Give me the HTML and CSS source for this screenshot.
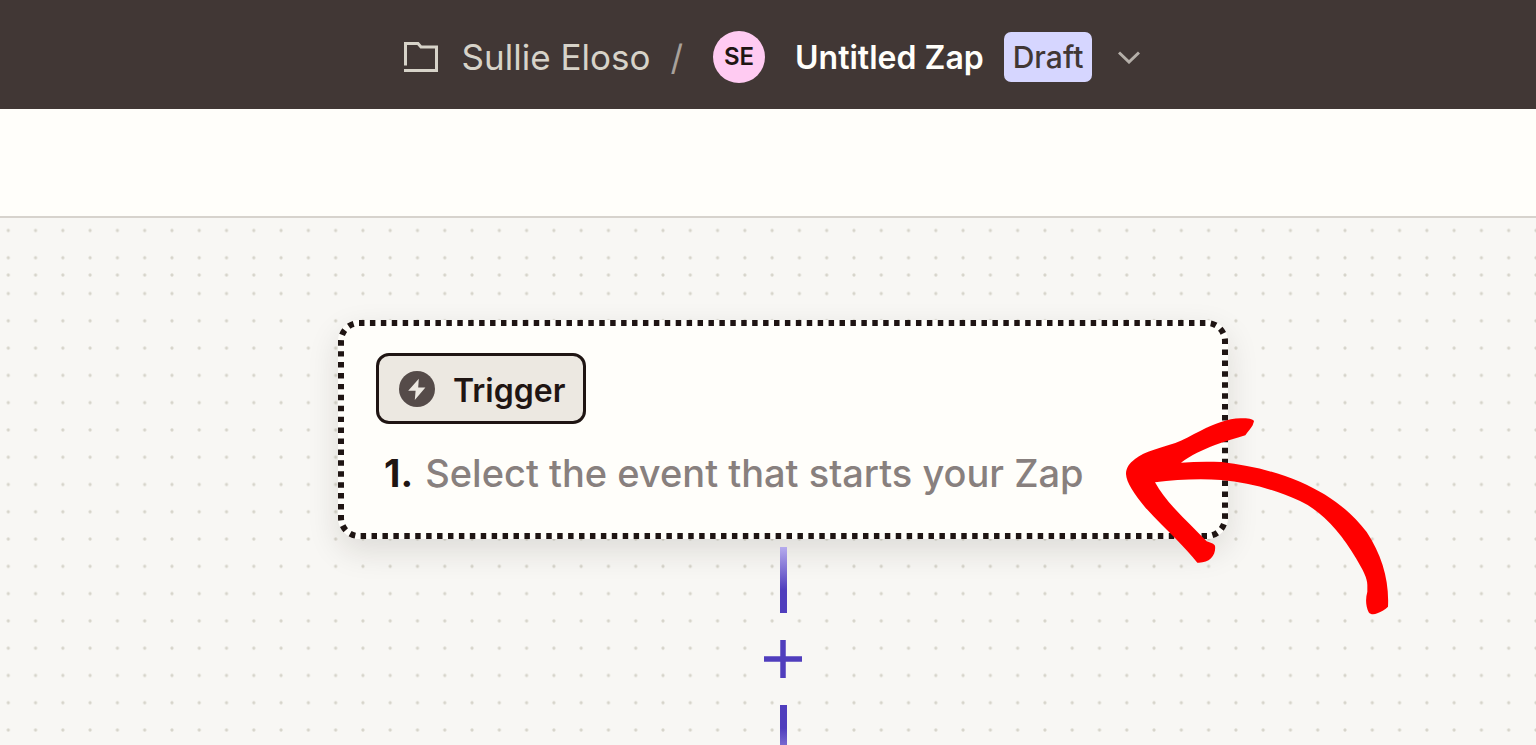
FILE: index.html
```html
<!DOCTYPE html>
<html lang="en">
<head>
    <meta charset="UTF-8">
    <meta name="viewport" content="width=device-width, initial-scale=1.0">
    <title>Untitled Zap</title>
    <link rel="stylesheet" href="styles.css">
</head>
<body>
    <header class="topbar">
        <a class="folder" href="#">
            <svg class="folder-icon" viewBox="0 0 34 32" aria-hidden="true">
                <path d="M1.5 24.5V2.5H14L17 6H32.5V29.5H0" fill="none" stroke="currentColor" stroke-width="3"/>
            </svg>
            <span>Sullie Eloso</span>
        </a>
        <span class="slash">/</span>
        <span class="avatar">SE</span>
        <h1 class="zap-name">Untitled Zap</h1>
        <span class="status">Draft</span>
        <button class="menu-btn" aria-label="Zap menu">
            <svg class="chevron" viewBox="0 0 22 14" aria-hidden="true">
                <path d="M1 2.5L11 12L21 2.5" fill="none" stroke="currentColor" stroke-width="3"/>
            </svg>
        </button>
    </header>

    <div class="toolbar"></div>

    <main class="canvas">
        <!-- dot grid -->
        <svg class="dots" aria-hidden="true">
            <defs>
                <pattern id="dots-top" x="-5.35" y="-1.15" width="27.28" height="27.28" patternUnits="userSpaceOnUse">
                    <circle cx="13.64" cy="13.64" r="1.6" fill="#d6d4ca"/>
                </pattern>
                <pattern id="dots-mid" href="#dots-top" y="43.4"/>
                <pattern id="dots-main" href="#dots-top" y="61.9"/>
            </defs>
            <rect width="100%" height="49" fill="url(#dots-top)"/>
            <rect y="49" width="100%" height="18" fill="url(#dots-mid)"/>
            <rect y="67" width="100%" height="100%" fill="url(#dots-main)"/>
        </svg>

        <div class="step">
            <button class="card">
                <svg class="card-border" aria-hidden="true">
                    <rect class="card-outline" x="3" y="3" rx="18" pathLength="396"/>
                </svg>
                <span class="badge">
                    <svg class="bolt-icon" viewBox="0 0 36 36" aria-hidden="true">
                        <circle cx="18" cy="18" r="18" fill="#554b49"/>
                        <path d="M19.8 7.8L9.2 19.8H16.6L15.8 29L26.4 16.4H19.2Z" fill="#ece8e1"/>
                    </svg>
                    <span class="badge-text">Trigger</span>
                </span>
                <span class="prompt"><b class="number">1.</b> Select the event that starts your Zap</span>
            </button>
            <svg class="arrow" viewBox="0 0 930 690" aria-hidden="true">
                <path fill="#ff0000" d="M462 64C459 56 444 55 422 55C382 56 345 71 302 92C275 105 250 120 226 129C180 144 136 153 105 177C88 190 78 204 78 222C79 248 103 282 134 320C165 356 199 387 230 419C252 441 274 466 292 488C309 489 323 485 333 475C343 465 347 449 345 438C343 431 331 429 320 424C287 391 255 359 223 325C200 300 180 274 165 247C228 239 297 235 364 240C445 247 525 269 600 303C668 335 724 400 768 475C790 512 802 535 802 555V575C796 596 797 618 806 637C812 645 823 644 832 640C844 634 856 629 864 620C868 540 845 464 800 396C748 328 684 282 600 245C525 214 445 195 364 186C324 185 282 185 243 188C272 166 309 149 345 135C376 123 408 116 436 106C444 94 453 85 458 76Z"/>
            </svg>
        </div>

        <div class="line line-in"></div>
        <button class="add-btn" aria-label="Add step">
            <svg class="plus" viewBox="0 0 38 38" aria-hidden="true">
                <path d="M19 0V38M0 19H38" stroke="currentColor" stroke-width="5.5"/>
            </svg>
        </button>
        <div class="line line-out"></div>
    </main>
</body>
</html>
```
FILE: styles.css
```css
* {
    box-sizing: border-box;
}

body {
    font-family: Inter, "Liberation Sans", sans-serif;
    margin: 0;
    height: 100vh;
    display: flex;
    flex-direction: column;
    background: #fffefa;
    color: #1f1513;
}

button {
    font: inherit;
    color: inherit;
    border: none;
    background: none;
    padding: 0;
    cursor: pointer;
}

svg {
    display: block;
    flex: none;
}

.topbar {
    display: flex;
    align-items: center;
    justify-content: center;
    height: 109px;
    padding: 5px 0 0 8px;
    background: #413735;
    color: #d7d3c9;
    white-space: nowrap;
    flex: none;
}

.folder {
    display: flex;
    align-items: center;
    gap: 24px;
    color: inherit;
    font-size: 35px;
    text-decoration: none;
}

.folder-icon {
    width: 34px;
    height: 32px;
}

.slash {
    margin: 0 30px 0 20px;
    font-size: 35px;
    color: #a8a19b;
}

.avatar {
    width: 52px;
    height: 52px;
    border-radius: 50%;
    background: #ffcbf2;
    color: #1f1513;
    font-size: 24px;
    font-weight: 600;
    line-height: 52px;
    text-align: center;
}

.zap-name {
    margin: 0 20px 0 30px;
    color: #fffefa;
    font-size: 32px;
    font-weight: 600;
}

.status {
    padding: 0 9px;
    border-radius: 7px;
    background: #d6d6ff;
    color: #413735;
    font-size: 30px;
    font-weight: 500;
    line-height: 50px;
}

.menu-btn {
    margin-left: 26px;
}

.chevron {
    width: 22px;
    height: 14px;
    color: #b5afa9;
}

.toolbar {
    height: 109px;
    border-bottom: 2px solid #d7d3cd;
    flex: none;
}

.canvas {
    position: relative;
    flex: 1;
    min-height: 0;
    display: flex;
    flex-direction: column;
    align-items: center;
    padding: 102px 0 0 30px;
    background: #f8f7f4;
    overflow: hidden;
}

.dots {
    position: absolute;
    top: 0;
    left: 0;
    width: 100%;
    height: 100%;
}

.step {
    position: relative;
    width: 100%;
    max-width: 890px;
    flex: none;
}

.card {
    position: relative;
    display: flex;
    flex-direction: column;
    align-items: flex-start;
    gap: 25px;
    width: 100%;
    padding: 33px 38px 41px;
    border-radius: 21px;
    background: #fffefa;
    box-shadow: 0 12px 32px rgba(31, 21, 19, 0.12);
    text-align: left;
}

.card-border {
    position: absolute;
    top: 0;
    left: 0;
    width: 100%;
    height: 100%;
}

.card-outline {
    width: calc(100% - 6px);
    height: calc(100% - 6px);
    fill: none;
    stroke: #1f1513;
    stroke-width: 6px;
    stroke-dasharray: 1 1;
}

.badge {
    display: flex;
    align-items: center;
    gap: 18px;
    padding: 14px 18px 14px 20px;
    border: 3px solid #1f1513;
    border-radius: 13px;
    background: #ece8e1;
}

.badge-text {
    padding-top: 4px;
    font-size: 32px;
    font-weight: 600;
    line-height: 33px;
}

.bolt-icon {
    width: 36px;
    height: 36px;
}

.prompt {
    padding-left: 8px;
    color: #88807e;
    font-size: 38px;
    font-weight: 500;
    line-height: 49px;
}

.number {
    margin-right: 2px;
    color: #1f1513;
    font-weight: 700;
}

.arrow {
    position: absolute;
    top: 80px;
    right: -182px;
    width: 310px;
    height: 230px;
    pointer-events: none;
}

.line {
    position: relative;
    width: 7px;
    height: 66px;
    flex: none;
}

.line-in {
    margin-top: 8px;
    background: linear-gradient(#b5abed, #503ebd 65%);
}

.line-out {
    background: linear-gradient(#503ebd 35%, #b5abed);
}

.add-btn {
    position: relative;
    margin: 22px 0;
    padding: 5px;
    background: #f8f7f4;
    color: #503ebd;
}

.plus {
    width: 38px;
    height: 38px;
}
```
